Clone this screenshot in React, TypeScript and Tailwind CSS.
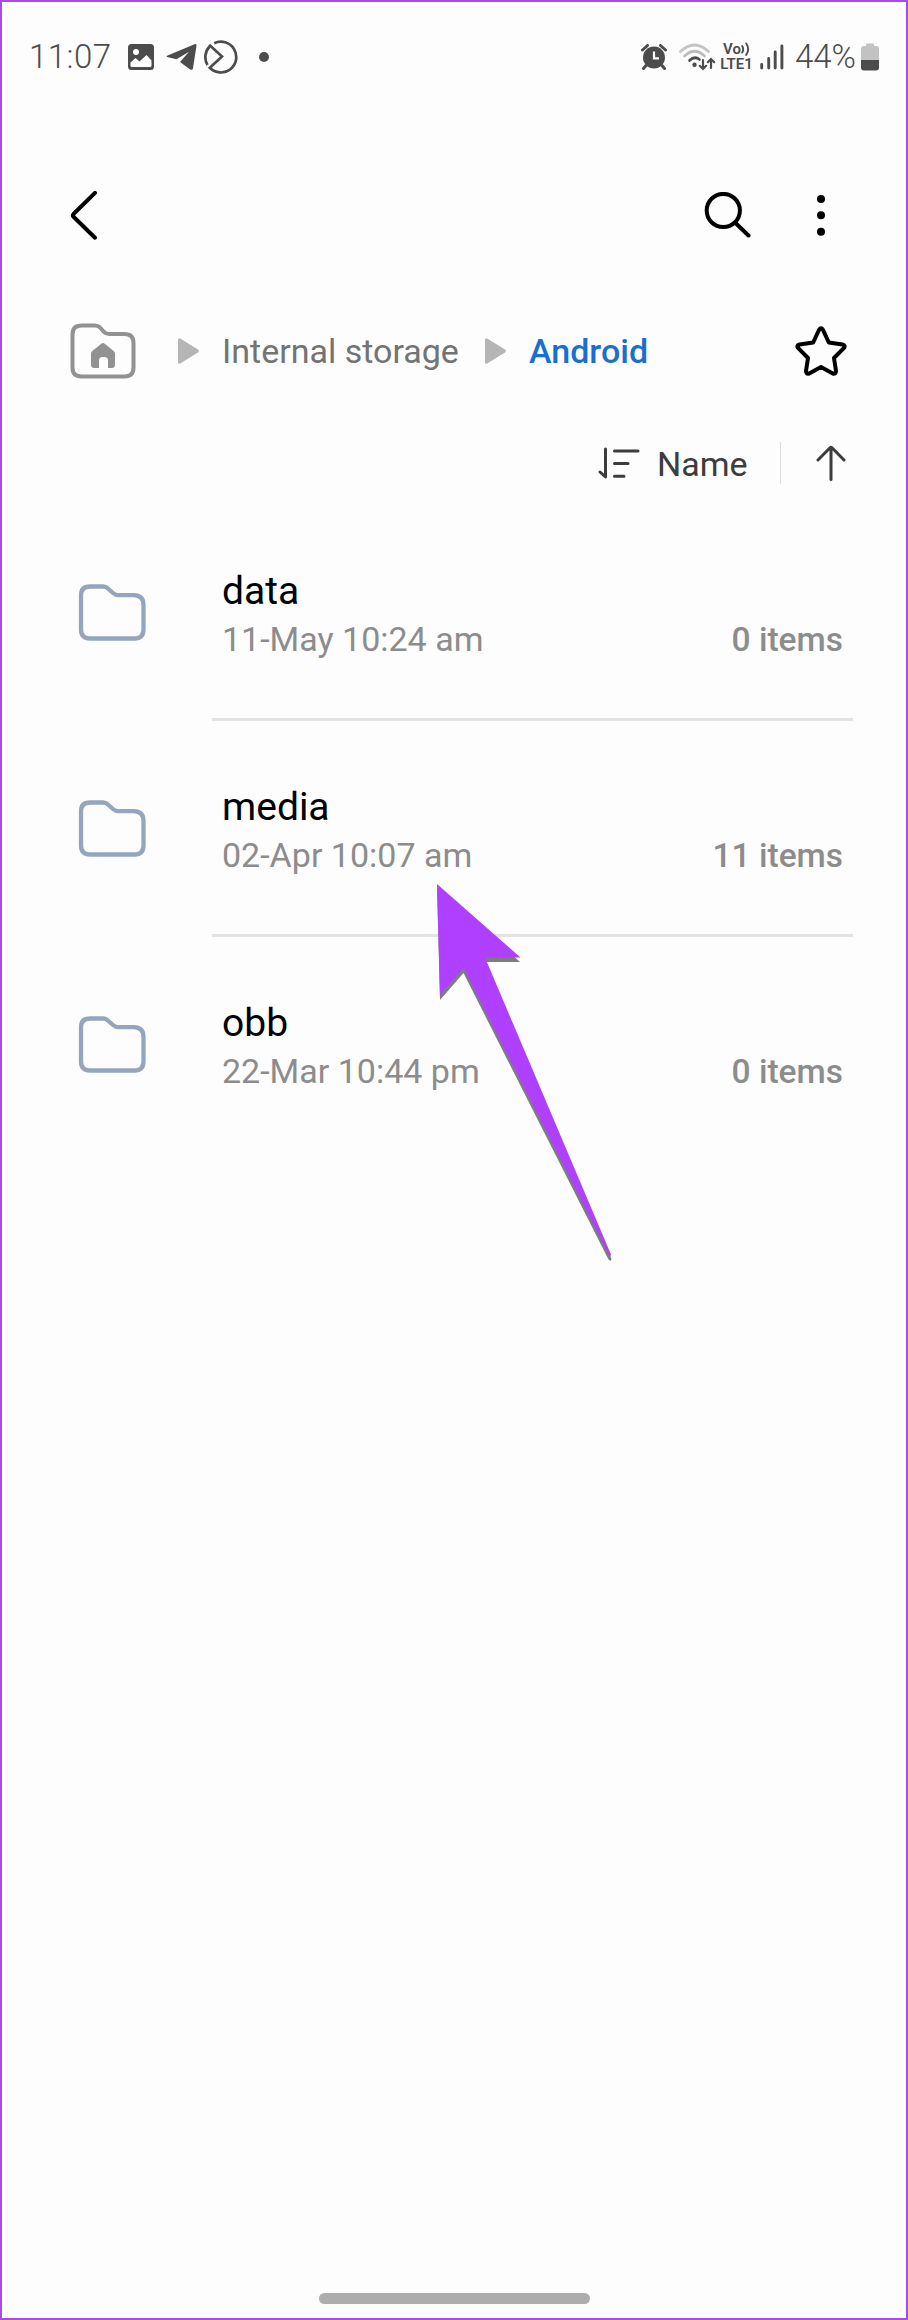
/**
 * File manager screen
 * Folder listing for Internal storage > Android
 */

interface FolderItem {
  name: string;
  modified: string;
  count: string;
}

const folders: FolderItem[] = [
  { name: 'data', modified: '11-May 10:24 am', count: '0 items' },
  { name: 'media', modified: '02-Apr 10:07 am', count: '11 items' },
  { name: 'obb', modified: '22-Mar 10:44 pm', count: '0 items' },
];

function StatusBar() {
  return (
    <div className="flex h-[109px] items-center justify-between px-[27px] text-[33px] leading-none text-[#4c4c4c]">
      <div className="flex items-center">
        <span className="w-[82px] font-[350] tracking-[0.5px] whitespace-nowrap">11:07</span>
        {/* gallery */}
        <svg className="ml-[17px] h-[26px] w-[26px]" viewBox="0 0 26 26">
          <rect width="26" height="26" rx="3.5" fill="#4c4c4c" />
          <circle cx="8" cy="8" r="3" fill="#fdfdfd" />
          <path d="M2.5 18.5 7.5 14l4 3.5 7-6.5 5 5.5v5.2q0 1.3-1.3 1.3H3.8q-1.3 0-1.3-1.3z" fill="#fdfdfd" />
        </svg>
        {/* telegram */}
        <svg className="ml-3 h-[28px] w-[31px]" viewBox="0 0 31 28">
          <path
            d="M1 12.8 28.5 1.2q2.2-.8 2 1.5L27 25q-.5 2.8-2.8 1.4L14 19l9-10.2L10.5 16.2 1 13.9q-.9-.6 0-1.1z"
            fill="#4c4c4c"
          />
        </svg>
        {/* data saver */}
        <svg className="ml-[7px] h-[34px] w-[34px]" viewBox="0 0 34 34" fill="none" stroke="#4c4c4c" strokeWidth="2.7">
          <path d="M10.2 3.2A15.4 15.4 0 1 1 5.8 27.8L18 16.5 5.2 4.8" />
          <path d="M5.6 6.5A15.4 15.4 0 0 0 3.5 25" />
        </svg>
        <span className="ml-[21px] size-2.5 rounded-full bg-[#4c4c4c]" />
      </div>

      <div className="flex items-center">
        {/* alarm */}
        <svg className="h-[26px] w-[26px]" viewBox="0 0 26 26">
          <circle cx="13" cy="13.5" r="11" fill="#4c4c4c" />
          <path d="M1.5 6 6.5 1.5M24.5 6l-5-4.5M5 21.5l-2.5 3M21 21.5l2.5 3" stroke="#4c4c4c" strokeWidth="3" strokeLinecap="round" />
          <path d="M13 7.5v6.8h5" fill="none" stroke="#fdfdfd" strokeWidth="2.2" />
        </svg>
        {/* wifi */}
        <svg className="ml-3 h-[28px] w-[37px]" viewBox="0 0 37 28" fill="none" strokeLinecap="round">
          <path d="M1.5 8.5Q15.5-4.5 29.5 8.5" stroke="#c4c4c4" strokeWidth="2.7" />
          <path d="M5.5 13Q15.5 3.5 25.5 13" stroke="#bcbcbc" strokeWidth="2.7" />
          <path d="M10.5 17.5Q15.5 12.5 20.5 16.5" stroke="#4c4c4c" strokeWidth="2.7" />
          <circle cx="15.5" cy="21.8" r="2.2" fill="#4c4c4c" />
          <path d="M24 17v9m-3.2-3.2L24 26l3.2-3.2M32 25v-9m-3.2 3.2L32 16l3.2 3.2" stroke="#4c4c4c" strokeWidth="2.2" />
        </svg>
        <div className="ml-[3px] flex w-[35px] flex-col items-center text-[15px] leading-[14.5px] font-semibold whitespace-nowrap">
          <span className="flex items-start">
            Vo
            <svg className="h-[14px] w-[9px]" viewBox="0 0 9 14" fill="none" stroke="#4c4c4c" strokeWidth="1.9" strokeLinecap="round">
              <path d="M1.2 4q2 3.3 0 6.6M5.2 1.5q4 5.7 0 11.4" />
            </svg>
          </span>
          <span>LTE1</span>
        </div>
        {/* signal */}
        <svg className="ml-[6px] h-[26px] w-[24px]" viewBox="0 0 24 26" stroke="#4c4c4c" strokeWidth="2.9" strokeLinecap="round">
          <path d="M1.7 20.5v3.5M8.7 14.5v9.500M15.2 8v16M21.9 2v22" />
        </svg>
        <span className="ml-[11px] w-[61px] font-[350] whitespace-nowrap">44%</span>
        {/* battery */}
        <svg className="ml-[5px] h-[28px] w-[18px]" viewBox="0 0 18 28">
          <path d="M5 3V1.500Q5 .5 6 .5h6q1 0 1 1V3h2q3 0 3 3v11H0V6q0-3 3-3z" fill="#c2c2c2" />
          <path d="M0 17h18v7.500q0 3-3 3H3q-3 0-3-3z" fill="#4c4c4c" />
        </svg>
      </div>
    </div>
  );
}

function Toolbar() {
  return (
    <div className="mt-[54px] flex h-[101px] items-center justify-between pr-[80px] pl-[68px]">
      <svg className="h-[50px] w-[30px]" viewBox="0 0 30 50" fill="none" stroke="#000" strokeWidth="4" strokeLinecap="round" strokeLinejoin="round">
        <path d="M25 1.8 3.5 23Q2.2 24.5 3.5 25.7L25 46.7" />
      </svg>
      <div className="flex items-center">
        <svg className="h-[48px] w-[47px]" viewBox="0 0 47 48" fill="none" stroke="#000" strokeWidth="4" strokeLinecap="round">
          <circle cx="19.3" cy="18.5" r="16.6" />
          <path d="m31.5 31 13 12.5" />
        </svg>
        <svg className="ml-[65px] h-[42px] w-[10px]" viewBox="0 0 10 42">
          <circle cx="5" cy="4" r="4" />
          <circle cx="5" cy="20.3" r="4" />
          <circle cx="5" cy="36.7" r="4" />
        </svg>
      </div>
    </div>
  );
}

function CrumbArrow() {
  return (
    <svg className="h-[26px] w-[22px] shrink-0" viewBox="0 0 22 26">
      <path d="M0 2Q0-.8 2.6.7L20 11.6q1.7 1.4 0 2.8L2.6 25.3Q0 26.8 0 24z" fill="#b5b5b5" />
    </svg>
  );
}

function Breadcrumb() {
  return (
    <div className="mt-[44px] flex h-[81px] items-center pl-[68px] text-[34px] leading-none whitespace-nowrap">
      <svg className="h-[56px] w-[66px]" viewBox="0 0 66 56">
        <path
          d="M10.5 2.5H25Q28 2.5 30 4.5L33.5 8.500Q36 11 39 11H54.500Q63.500 11 63.500 20V44.500Q63.500 53.500 54.500 53.500H11.500Q2.500 53.500 2.500 44.500V11.500Q2.500 2.500 11.500 2.500Z"
          fill="none"
          stroke="#929292"
          strokeWidth="4"
        />
        <path
          d="M31.3 20.8q1.7-1.4 3.4 0l9 7.2q1.3 1 1.3 2.7v11q0 3.3-3.3 3.3H38v-7.500q0-3.500-3.500-3.500h-2Q29 34 29 37.500V45h-4.700q-3.300 0-3.300-3.300v-11q0-1.700 1.300-2.700z"
          fill="#929292"
        />
      </svg>
      <div className="ml-[42px]">
        <CrumbArrow />
      </div>
      <span className="ml-[22px] w-[241px] text-[#737373]">Internal storage</span>
      <div className="ml-[22px]">
        <CrumbArrow />
      </div>
      <span className="ml-[22px] font-medium text-[#1a6ecf]">Android</span>
      <svg className="mr-[59px] ml-auto h-[50px] w-[52px]" viewBox="0 0 52 50" fill="none" stroke="#000" strokeWidth="4" strokeLinejoin="round">
        <path d="M24 3.8Q26 .8 28 3.8L33.8 16.5 47.5 18.5Q51 19.5 48.8 22.2L39 32 41 45Q41 48.5 37.8 47.5L26 41 14.2 47.5Q11 48.5 11 45L13 32 3.2 22.2Q1 19.5 4.5 18.5L18.2 16.5Z" />
      </svg>
    </div>
  );
}

function SortRow() {
  return (
    <div className="mt-[51px] flex h-[42px] items-center justify-end pr-[60px] text-[34px] leading-none text-[#3c3c3c]">
      <svg className="h-[32px] w-[42px]" viewBox="0 0 42 32" fill="none" stroke="#3c3c3c" strokeWidth="3" strokeLinecap="round" strokeLinejoin="round">
        <path d="M7.5 2v28L2 25M16.5 4H40M16.5 16.5H30M16.5 29.2H26" />
      </svg>
      <span className="mt-[2px] ml-[17px] w-[93px]">Name</span>
      <span className="ml-[30px] h-[42px] w-px bg-[#dedede]" />
      <svg className="ml-[35px] h-[36px] w-[30px]" viewBox="0 0 30 36" fill="none" stroke="#3c3c3c" strokeWidth="3" strokeLinecap="round" strokeLinejoin="round">
        <path d="M15 34.5V3M2 15 13.8 3q1.2-1.2 2.4 0L28 15" />
      </svg>
    </div>
  );
}

function FolderRow({ item, last }: { item: FolderItem; last: boolean }) {
  return (
    <div className="flex h-[216px] pr-[53px] pl-[76px]">
      <svg className="mt-[79px] h-[58px] w-[69px] shrink-0" viewBox="0 0 69 58">
        <path
          d="M12 2.5H25Q28 2.5 30 4.5L35 9Q37.5 11.2 40.5 11.2H55.5Q65.5 11.2 65.5 21V45.5Q65.5 54.5 56.5 54.5H12Q3 54.5 3 45.5V11.5Q3 2.5 12 2.5Z"
          fill="none"
          stroke="#94a5be"
          strokeWidth="4.3"
        />
      </svg>
      <div
        className={
          last
            ? 'ml-[65px] flex flex-1 justify-between px-[10px] pt-[62px]'
            : 'ml-[65px] flex flex-1 justify-between border-b-3 border-[#e3e3e3] px-[10px] pt-[62px]'
        }
      >
        <div className="whitespace-nowrap">
          <div className="text-[39px] leading-[48px] text-black">{item.name}</div>
          <div className="text-[34px] leading-[49px] text-[#8c8c8c]">{item.modified}</div>
        </div>
        <div className="mt-[48px] text-[33.5px] leading-[49px] font-medium whitespace-nowrap text-[#8c8c8c]">
          {item.count}
        </div>
      </div>
    </div>
  );
}

export default function App() {
  return (
    <div className="relative flex h-[2320px] w-[908px] flex-col overflow-hidden border-2 border-[#a74ceb] bg-[#fdfdfd] font-['Roboto',sans-serif]">
      <StatusBar />
      <Toolbar />
      <Breadcrumb />
      <SortRow />

      <div className="mt-[21px]">
        {folders.map((item, i) => (
          <FolderRow key={item.name} item={item} last={i === folders.length - 1} />
        ))}
      </div>

      {/* gesture bar */}
      <div className="mt-auto mb-[14px] h-[11px] w-[271px] self-center rounded-full bg-[#adadad]" />

      {/* pointer over the list */}
      <svg className="absolute top-[882px] left-[435px] h-[382px] w-[182px]" viewBox="0 0 182 382">
        <path d="M0 4 83 78H49L174.5 375 173.5 377 171.5 375.5 26.5 89 3 116Z" fill="#7d7d7d" />
        <path d="M0 0 83.5 73.5H48L174 370.5 173 373 26.5 84 3 111Z" fill="#b040ff" />
      </svg>
    </div>
  );
}
